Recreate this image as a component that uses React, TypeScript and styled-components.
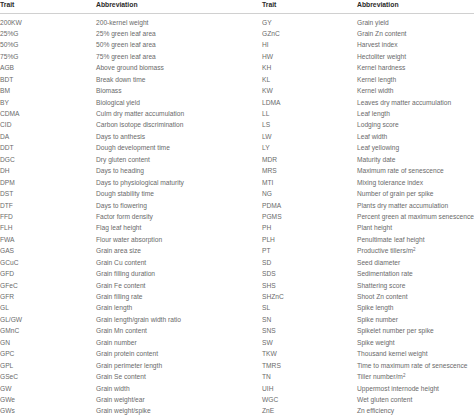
import React from "react";
import styled, { createGlobalStyle } from "styled-components";

const Global = createGlobalStyle`
  html, body { margin: 0; padding: 0; background: #ffffff; }
  body { font-family: "Liberation Sans", Arial, Helvetica, sans-serif; overflow: hidden; }
`;

const Table = styled.div`
  width: 474px;
  display: flex;
  flex-direction: column;
`;

const HeaderRow = styled.div`
  display: grid;
  grid-template-columns: 96px 166px 95px 1fr;
  height: 12.5px;
  border-bottom: 1px solid #d0d0d0;
  align-items: start;
`;

const HeaderCell = styled.div`
  font-size: 6.8px;
  font-weight: bold;
  color: #2a2a2a;
  line-height: 8px;
  padding-top: 0.5px;
  white-space: nowrap;
`;

const Body = styled.div`
  padding-top: 3px;
  display: flex;
  flex-direction: column;
`;

const Row = styled.div`
  display: grid;
  grid-template-columns: 96px 166px 95px 1fr;
  height: 11.44px;
  align-items: center;
`;

const Cell = styled.div`
  font-size: 6.65px;
  color: #6a6a6a;
  line-height: 11.44px;
  white-space: nowrap;
  sup {
    font-size: 4.5px;
    line-height: 0;
    vertical-align: 2.5px;
  }
`;

type Entry = [string, React.ReactNode];

const left: Entry[] = [
  ["200KW", "200-kernel weight"],
  ["25%G", "25% green leaf area"],
  ["50%G", "50% green leaf area"],
  ["75%G", "75% green leaf area"],
  ["AGB", "Above ground biomass"],
  ["BDT", "Break down time"],
  ["BM", "Biomass"],
  ["BY", "Biological yield"],
  ["CDMA", "Culm dry matter accumulation"],
  ["CID", "Carbon isotope discrimination"],
  ["DA", "Days to anthesis"],
  ["DDT", "Dough development time"],
  ["DGC", "Dry gluten content"],
  ["DH", "Days to heading"],
  ["DPM", "Days to physiological maturity"],
  ["DST", "Dough stability time"],
  ["DTF", "Days to flowering"],
  ["FFD", "Factor form density"],
  ["FLH", "Flag leaf height"],
  ["FWA", "Flour water absorption"],
  ["GAS", "Grain area size"],
  ["GCuC", "Grain Cu content"],
  ["GFD", "Grain filling duration"],
  ["GFeC", "Grain Fe content"],
  ["GFR", "Grain filling rate"],
  ["GL", "Grain length"],
  ["GL/GW", "Grain length/grain width ratio"],
  ["GMnC", "Grain Mn content"],
  ["GN", "Grain number"],
  ["GPC", "Grain protein content"],
  ["GPL", "Grain perimeter length"],
  ["GSeC", "Grain Se content"],
  ["GW", "Grain width"],
  ["GWe", "Grain weight/ear"],
  ["GWs", "Grain weight/spike"],
];

const right: Entry[] = [
  ["GY", "Grain yield"],
  ["GZnC", "Grain Zn content"],
  ["HI", "Harvest index"],
  ["HW", "Hectoliter weight"],
  ["KH", "Kernel hardness"],
  ["KL", "Kernel length"],
  ["KW", "Kernel width"],
  ["LDMA", "Leaves dry matter accumulation"],
  ["LL", "Leaf length"],
  ["LS", "Lodging score"],
  ["LW", "Leaf width"],
  ["LY", "Leaf yellowing"],
  ["MDR", "Maturity date"],
  ["MRS", "Maximum rate of senescence"],
  ["MTI", "Mixing tolerance index"],
  ["NG", "Number of grain per spike"],
  ["PDMA", "Plants dry matter accumulation"],
  ["PGMS", "Percent green at maximum senescence"],
  ["PH", "Plant height"],
  ["PLH", "Penultimate leaf height"],
  ["PT", <>Productive tillers/m<sup>2</sup></>],
  ["SD", "Seed diameter"],
  ["SDS", "Sedimentation rate"],
  ["SHS", "Shattering score"],
  ["SHZnC", "Shoot Zn content"],
  ["SL", "Spike length"],
  ["SN", "Spike number"],
  ["SNS", "Spikelet number per spike"],
  ["SW", "Spike weight"],
  ["TKW", "Thousand kernel weight"],
  ["TMRS", "Time to maximum rate of senescence"],
  ["TN", <>Tiller number/m<sup>2</sup></>],
  ["UIH", "Uppermost internode height"],
  ["WGC", "Wet gluten content"],
  ["ZnE", "Zn efficiency"],
];

export default function App() {
  return (
    <>
      <Global />
      <Table>
        <HeaderRow>
          <HeaderCell>Trait</HeaderCell>
          <HeaderCell>Abbreviation</HeaderCell>
          <HeaderCell>Trait</HeaderCell>
          <HeaderCell>Abbreviation</HeaderCell>
        </HeaderRow>
        <Body>
          {left.map((l, i) => (
            <Row key={i}>
              <Cell>{l[0]}</Cell>
              <Cell>{l[1]}</Cell>
              <Cell>{right[i][0]}</Cell>
              <Cell>{right[i][1]}</Cell>
            </Row>
          ))}
        </Body>
      </Table>
    </>
  );
}
